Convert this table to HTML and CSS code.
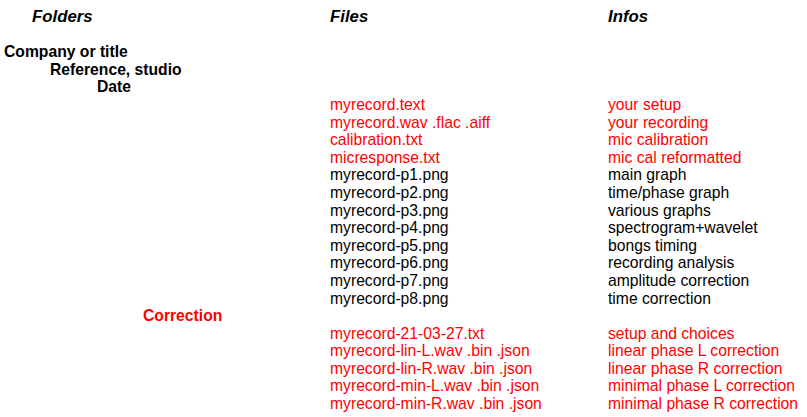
FILE: index.html
```html
<!DOCTYPE html>
<html lang="en">
<head>
<meta charset="utf-8">
<title>Folders, files, infos</title>
<link rel="stylesheet" href="styles.css">
</head>
<body>
<div class="sheet">
  <div class="row head"><div class="cell folder h">Folders</div><div class="cell">Files</div><div class="cell">Infos</div></div>
  <div class="row"><div class="cell"></div><div class="cell"></div><div class="cell"></div></div>
  <div class="row"><div class="cell folder l0">Company or title</div><div class="cell"></div><div class="cell"></div></div>
  <div class="row"><div class="cell folder l1">Reference, studio</div><div class="cell"></div><div class="cell"></div></div>
  <div class="row"><div class="cell folder l2">Date</div><div class="cell"></div><div class="cell"></div></div>
  <div class="row red"><div class="cell"></div><div class="cell">myrecord.text</div><div class="cell">your setup</div></div>
  <div class="row red"><div class="cell"></div><div class="cell">myrecord.wav .flac .aiff</div><div class="cell">your recording</div></div>
  <div class="row red"><div class="cell"></div><div class="cell">calibration.txt</div><div class="cell">mic calibration</div></div>
  <div class="row red"><div class="cell"></div><div class="cell">micresponse.txt</div><div class="cell">mic cal reformatted</div></div>
  <div class="row"><div class="cell"></div><div class="cell">myrecord-p1.png</div><div class="cell">main graph</div></div>
  <div class="row"><div class="cell"></div><div class="cell">myrecord-p2.png</div><div class="cell">time/phase graph</div></div>
  <div class="row"><div class="cell"></div><div class="cell">myrecord-p3.png</div><div class="cell">various graphs</div></div>
  <div class="row"><div class="cell"></div><div class="cell">myrecord-p4.png</div><div class="cell">spectrogram+wavelet</div></div>
  <div class="row"><div class="cell"></div><div class="cell">myrecord-p5.png</div><div class="cell">bongs timing</div></div>
  <div class="row"><div class="cell"></div><div class="cell">myrecord-p6.png</div><div class="cell">recording analysis</div></div>
  <div class="row"><div class="cell"></div><div class="cell">myrecord-p7.png</div><div class="cell">amplitude correction</div></div>
  <div class="row"><div class="cell"></div><div class="cell">myrecord-p8.png</div><div class="cell">time correction</div></div>
  <div class="row red"><div class="cell folder l3">Correction</div><div class="cell"></div><div class="cell"></div></div>
  <div class="row red"><div class="cell"></div><div class="cell">myrecord-21-03-27.txt</div><div class="cell">setup and choices</div></div>
  <div class="row red"><div class="cell"></div><div class="cell">myrecord-lin-L.wav .bin .json</div><div class="cell">linear phase L correction</div></div>
  <div class="row red"><div class="cell"></div><div class="cell">myrecord-lin-R.wav .bin .json</div><div class="cell">linear phase R correction</div></div>
  <div class="row red"><div class="cell"></div><div class="cell">myrecord-min-L.wav .bin .json</div><div class="cell">minimal phase L correction</div></div>
  <div class="row red"><div class="cell"></div><div class="cell">myrecord-min-R.wav .bin .json</div><div class="cell">minimal phase R correction</div></div>
</div>
</body>
</html>
```
FILE: styles.css
```css
html, body {
  margin: 0;
  padding: 0;
  background: #ffffff;
}

.sheet {
  padding-top: 8px;
  font-family: "Liberation Sans", Arial, sans-serif;
  font-size: 15.7px;
  color: #000000;
}

.row {
  display: grid;
  grid-template-columns: 326px 278px 1fr;
  height: 17.6px;
  line-height: 17.6px;
  white-space: nowrap;
}

.cell {
  padding-left: 4px;
  overflow: visible;
}

.head .cell {
  font-weight: bold;
  font-style: italic;
  font-size: 16.8px;
}

.red {
  color: #ff0000;
}

.folder {
  font-weight: bold;
}

.folder.h { padding-left: 32px; }
.folder.l0 { padding-left: 4px; }
.folder.l1 { padding-left: 50px; }
.folder.l2 { padding-left: 97px; }
.folder.l3 { padding-left: 143px; }
```
